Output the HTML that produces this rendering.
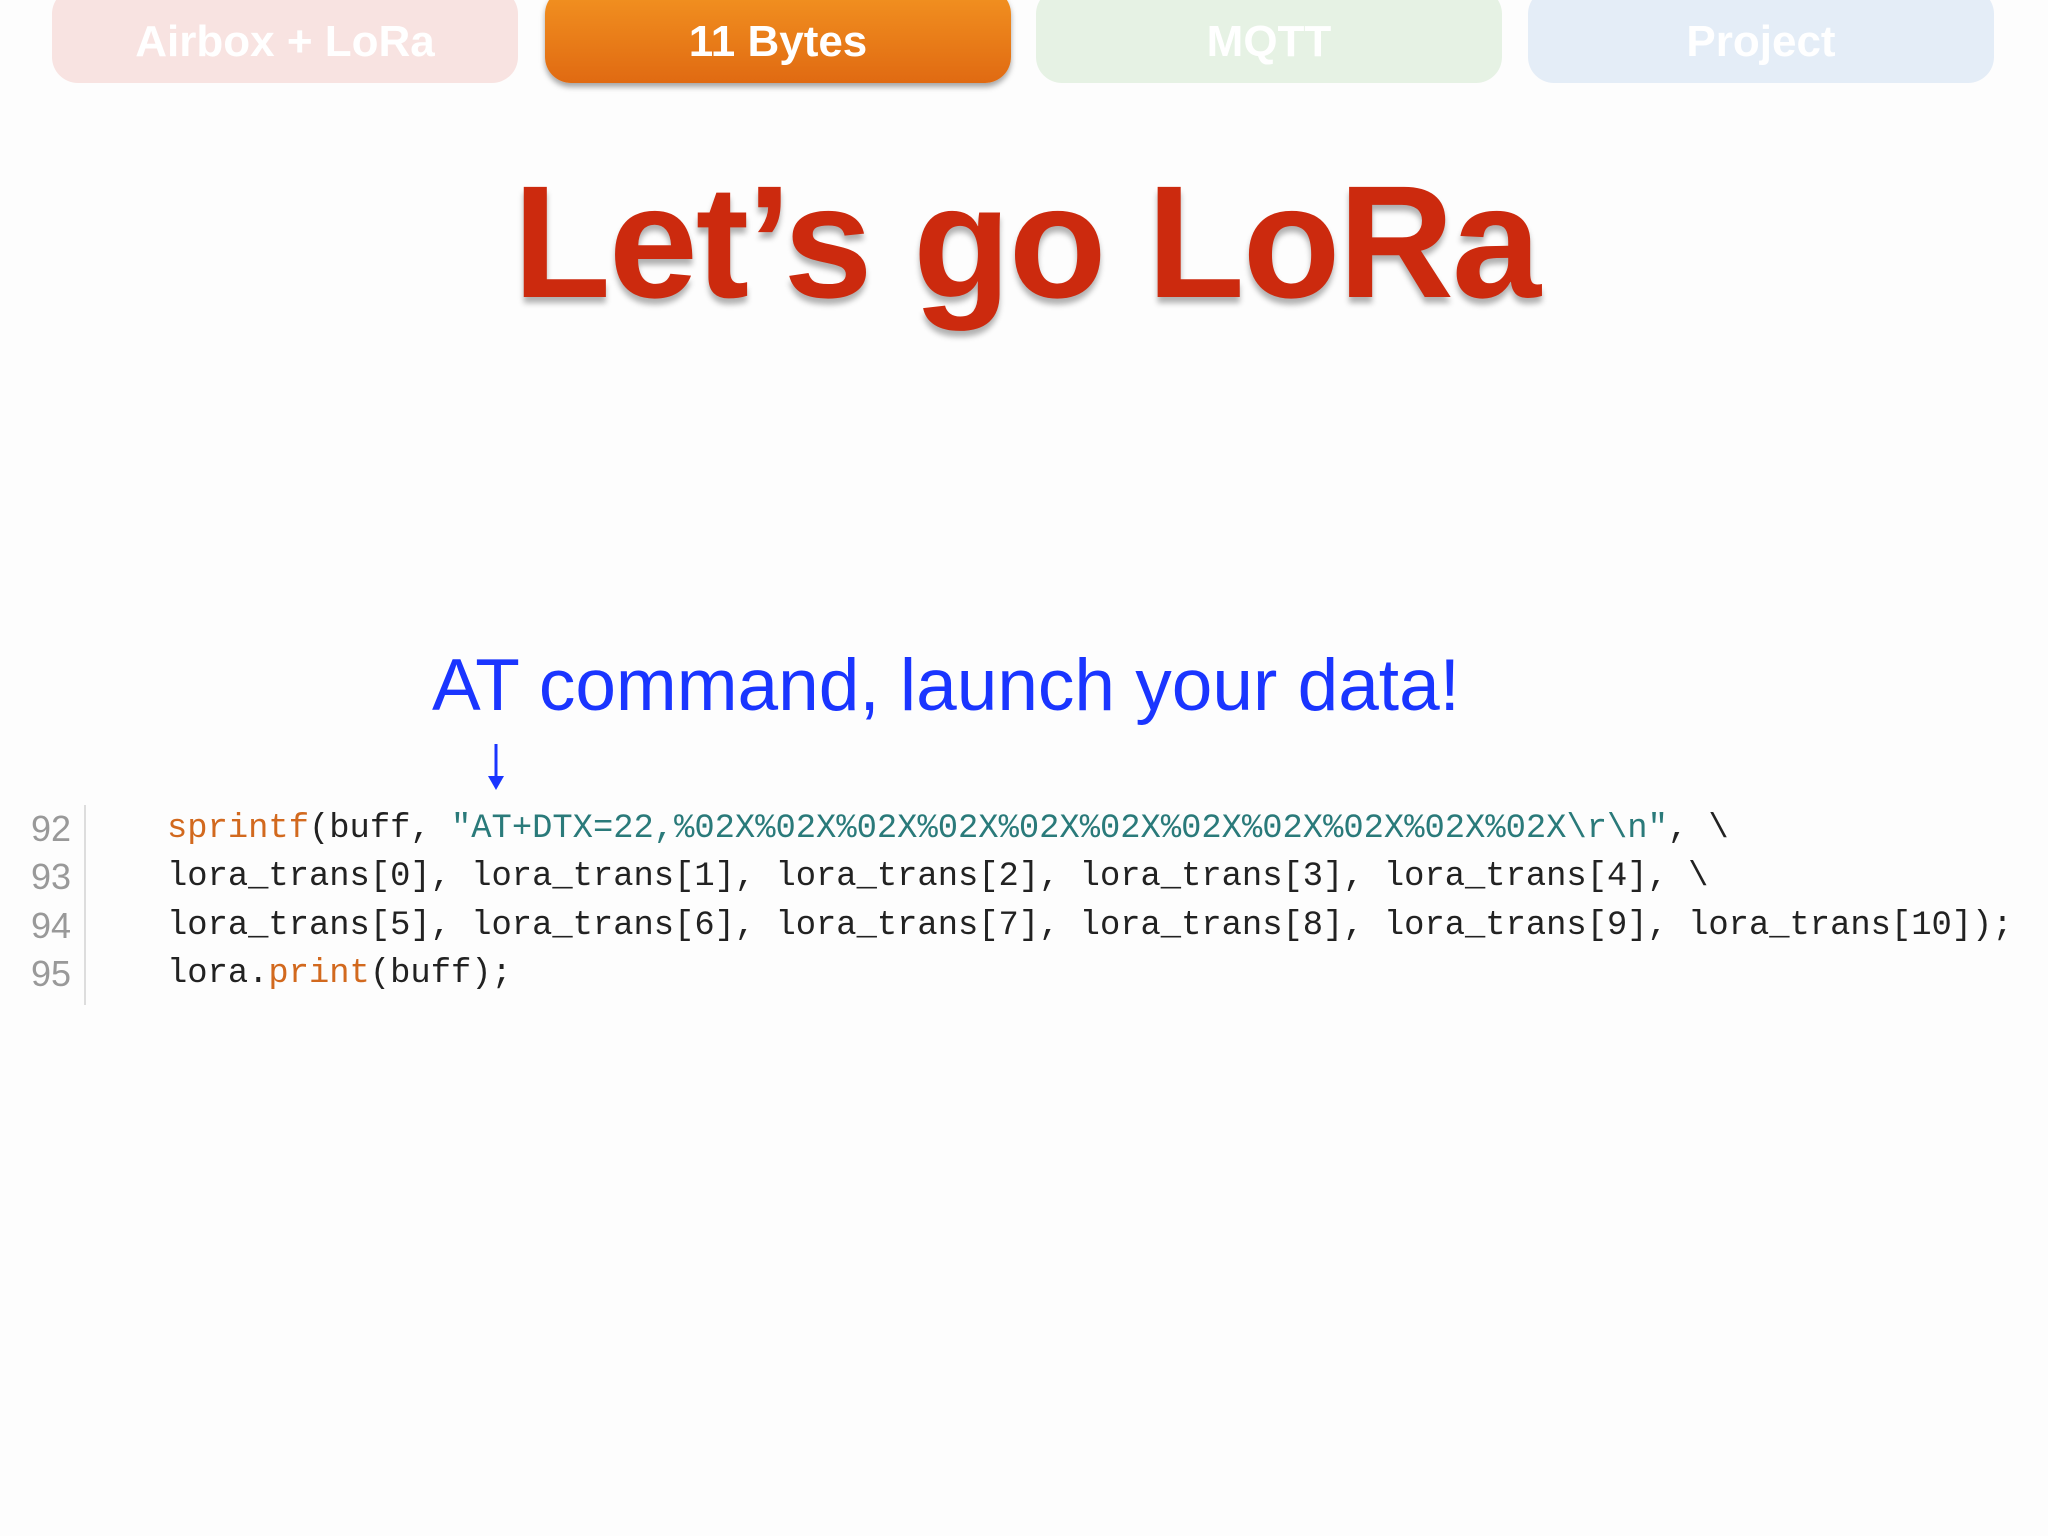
<!DOCTYPE html>
<html><head><meta charset="utf-8"><style>
body{margin:0;width:2048px;height:1536px;background:#fdfdfd;position:relative;overflow:hidden;font-family:"Liberation Sans",sans-serif}
.tab{position:absolute;top:-12px;height:95px;width:466px;border-radius:26px;color:#fff;font-weight:bold;font-size:44px;text-align:center;line-height:108px;box-sizing:border-box}
.t1{left:52px;background:#f8e3e1}
.t2{left:545px;background:linear-gradient(#f39321,#e06a12);box-shadow:0 4px 6px rgba(0,0,0,.35)}
.t3{left:1036px;background:#e6f2e4}
.t4{left:1528px;background:#e4edf7}
h1{position:absolute;top:150px;left:0;width:2052px;text-align:center;margin:0;font-size:160px;font-weight:bold;color:#cc2a0e;text-shadow:0 6px 6px rgba(0,0,0,.3);letter-spacing:-2px}
.sub{position:absolute;left:432px;top:644px;font-size:73px;color:#1a35ff;white-space:nowrap}
.arrow{position:absolute;left:485px;top:742px}
.code{position:absolute;left:167px;top:805px;font-family:"Liberation Mono",monospace;font-size:33.8px;line-height:48.3px;color:#222;white-space:pre}
.ln{position:absolute;left:31px;top:805px;font-size:36px;line-height:48.3px;color:#999;text-align:left}
.bar{position:absolute;left:84px;top:805px;width:2px;height:200px;background:#ddd}
.o{color:#d2691e}.g{color:#2a7a7a}
</style></head><body>
<div class="tab t1">Airbox + LoRa</div>
<div class="tab t2">11 Bytes</div>
<div class="tab t3">MQTT</div>
<div class="tab t4">Project</div>
<h1>Let’s go LoRa</h1>
<div class="sub">AT command, launch your data!</div>
<svg class="arrow" width="22" height="50" viewBox="0 0 22 50"><line x1="11" y1="2" x2="11" y2="40" stroke="#1a35ff" stroke-width="3"/><path d="M3 34 L11 48 L19 34 Z" fill="#1a35ff"/></svg>
<div class="ln">92<br>93<br>94<br>95</div>
<div class="bar"></div>
<div class="code"><span class="o">sprintf</span>(buff, <span class="g">"AT+DTX=22,%02X%02X%02X%02X%02X%02X%02X%02X%02X%02X%02X\r\n"</span>, \
lora_trans[0], lora_trans[1], lora_trans[2], lora_trans[3], lora_trans[4], \
lora_trans[5], lora_trans[6], lora_trans[7], lora_trans[8], lora_trans[9], lora_trans[10]);
lora.<span class="o">print</span>(buff);</div>
</body></html>
